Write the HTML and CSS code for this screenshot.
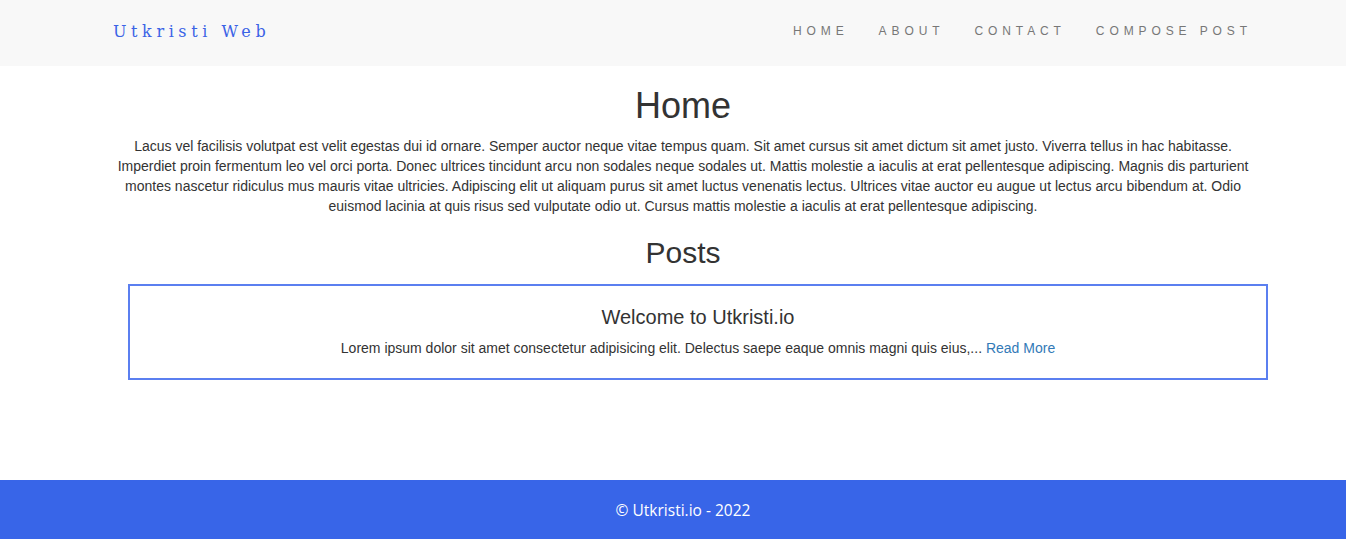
FILE: index.html
```html
<!DOCTYPE html>
<html lang="en">
<head>
    <meta charset="UTF-8">
    <meta name="viewport" content="width=device-width, initial-scale=1.0">
    <title>Utkristi Web</title>
    <link rel="stylesheet" href="styles.css">
</head>
<body>
    <header class="navbar">
        <div class="wrap navbar-inner">
            <a class="brand" href="#">Utkristi Web</a>
            <nav class="nav">
                <a href="#">Home</a>
                <a href="#">About</a>
                <a href="#">Contact</a>
                <a href="#">Compose Post</a>
            </nav>
        </div>
    </header>

    <main class="wrap content">
        <h1>Home</h1>
        <p class="intro">Lacus vel facilisis volutpat est velit egestas dui id ornare. Semper auctor neque vitae tempus quam. Sit amet cursus sit amet dictum sit amet justo. Viverra tellus in hac habitasse. Imperdiet proin fermentum leo vel orci porta. Donec ultrices tincidunt arcu non sodales neque sodales ut. Mattis molestie a iaculis at erat pellentesque adipiscing. Magnis dis parturient montes nascetur ridiculus mus mauris vitae ultricies. Adipiscing elit ut aliquam purus sit amet luctus venenatis lectus. Ultrices vitae auctor eu augue ut lectus arcu bibendum at. Odio euismod lacinia at quis risus sed vulputate odio ut. Cursus mattis molestie a iaculis at erat pellentesque adipiscing.</p>

        <h2>Posts</h2>
        <div class="post">
            <h3>Welcome to Utkristi.io</h3>
            <p>Lorem ipsum dolor sit amet consectetur adipisicing elit. Delectus saepe eaque omnis magni quis eius,... <a href="#">Read More</a></p>
        </div>
    </main>

    <footer class="footer">
        <div class="wrap footer-inner">&copy; Utkristi.io - 2022</div>
    </footer>
</body>
</html>
```

FILE: styles.css
```css
* {
    box-sizing: border-box;
}

body {
    margin: 0;
    min-height: 100vh;
    display: flex;
    flex-direction: column;
    font-family: "Liberation Sans", Arial, sans-serif;
    font-size: 14px;
    line-height: 20px;
    color: #333;
    background-color: #fff;
}

a {
    text-decoration: none;
}

.wrap {
    width: 1140px;
    margin-left: 113px;
}

.navbar {
    height: 66px;
    background-color: #f8f8f8;
}

.navbar-inner {
    height: 100%;
    display: flex;
    align-items: center;
    justify-content: space-between;
}

.brand {
    font-family: "DejaVu Serif", "Liberation Serif", serif;
    font-size: 16px;
    letter-spacing: 4.6px;
    color: #3b63e6;
    padding-bottom: 2px;
}

.nav {
    display: flex;
    gap: 30px;
    padding-bottom: 4px;
    margin-right: 1px;
}

.nav a {
    font-size: 12px;
    letter-spacing: 4.9px;
    text-transform: uppercase;
    color: #777;
}

.content {
    text-align: center;
}

h1 {
    font-size: 36px;
    font-weight: 500;
    line-height: 40px;
    margin: 20px 0 10px;
}

.intro {
    margin: 0 -4px 10px;
}

h2 {
    font-size: 30px;
    font-weight: 500;
    line-height: 33px;
    margin: 20px 0 15px;
}

.post {
    width: 1140px;
    margin-left: 15px;
    height: 96px;
    border: 2px solid #5b7ff0;
    padding-top: 19px;
}

.post h3 {
    font-size: 20px;
    font-weight: 500;
    line-height: 24px;
    margin: 0 0 9px;
}

.post p {
    margin: 0;
}

.post a {
    color: #337ab7;
}

.footer {
    margin-top: auto;
    height: 59px;
    display: flex;
    align-items: center;
    background-color: #3865e8;
    color: #fff;
    font-family: "Open Sans", "Noto Sans", sans-serif;
    font-size: 15.5px;
}

.footer-inner {
    text-align: center;
}
```
